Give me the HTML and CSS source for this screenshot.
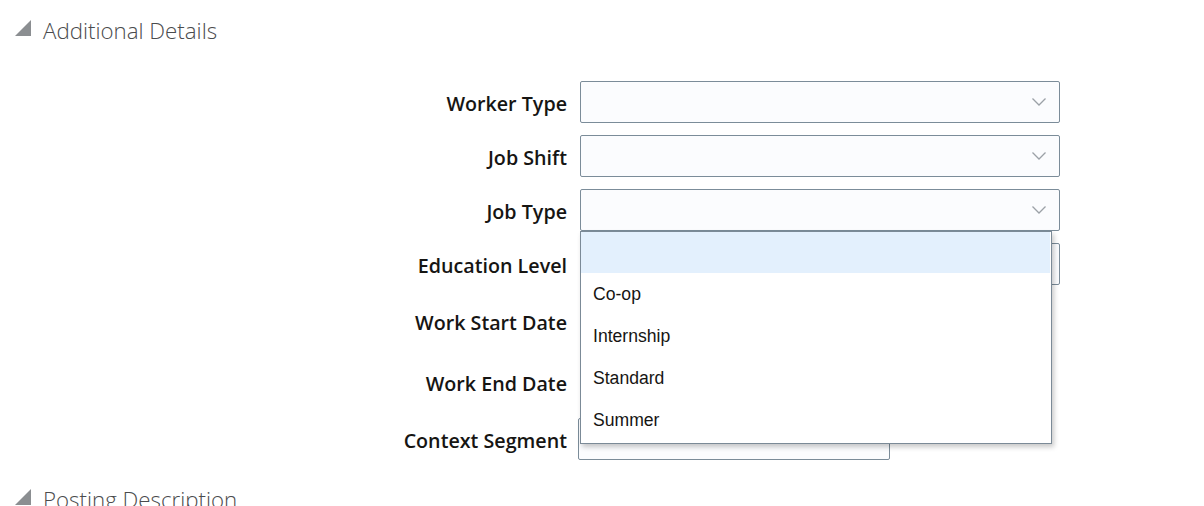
FILE: index.html
```html
<!DOCTYPE html>
<html lang="en">
<head>
<meta charset="utf-8">
<title>Additional Details</title>
<link rel="stylesheet" href="styles.css">
</head>
<body>
<section class="panel">
  <header class="disclosure">
    <span class="tri"></span>
    <h2 class="disclosure-title">Additional Details</h2>
  </header>
  <div class="form">
    <div class="row">
      <label class="label">Worker Type</label>
      <div class="select">
        <svg class="chev" viewBox="0 0 14 8" width="14" height="8"><path d="M0.5 0.5 L7 7 L13.5 0.5" fill="none" stroke="#9ba1a7" stroke-width="1.3"/></svg>
      </div>
    </div>
    <div class="row">
      <label class="label">Job Shift</label>
      <div class="select">
        <svg class="chev" viewBox="0 0 14 8" width="14" height="8"><path d="M0.5 0.5 L7 7 L13.5 0.5" fill="none" stroke="#9ba1a7" stroke-width="1.3"/></svg>
      </div>
    </div>
    <div class="row">
      <label class="label">Job Type</label>
      <div class="select open">
        <svg class="chev" viewBox="0 0 14 8" width="14" height="8"><path d="M0.5 0.5 L7 7 L13.5 0.5" fill="none" stroke="#9ba1a7" stroke-width="1.3"/></svg>
        <ul class="listbox">
          <li class="option active"></li>
          <li class="option">Co-op</li>
          <li class="option">Internship</li>
          <li class="option">Standard</li>
          <li class="option">Summer</li>
        </ul>
      </div>
    </div>
    <div class="row">
      <label class="label">Education Level</label>
      <div class="select"></div>
    </div>
    <div class="row row-start">
      <label class="label">Work Start Date</label>
      <div class="select date"></div>
    </div>
    <div class="row row-end">
      <label class="label">Work End Date</label>
      <div class="select date"></div>
    </div>
    <div class="row row-context">
      <label class="label">Context Segment</label>
      <div class="select context"></div>
    </div>
  </div>
</section>
<section class="panel">
  <header class="disclosure disclosure-next">
    <span class="tri"></span>
    <h2 class="disclosure-title">Posting Description</h2>
  </header>
</section>
</body>
</html>
```
FILE: styles.css
```css
html, body {
  margin: 0;
  padding: 0;
  background: #ffffff;
  overflow: hidden;
  height: 506px;
}
body {
  font-family: "Open Sans", "Noto Sans", sans-serif;
  color: #161513;
}
.disclosure {
  display: flex;
  align-items: center;
  gap: 12px;
  padding: 14px 0 0 15px;
  height: 30px;
}
.tri {
  width: 0;
  height: 0;
  border-style: solid;
  border-width: 0 0 16px 16px;
  border-color: transparent transparent #8b8e91 transparent;
  margin-top: -3px;
}
.disclosure-title {
  margin: 0;
  font-family: "Open Sans", sans-serif;
  font-weight: 300;
  font-size: 22.3px;
  color: #4a4b4d;
  line-height: 30px;
  padding-top: 3px;
}
.form {
  display: flex;
  flex-direction: column;
  gap: 12px;
  padding-top: 37px;
}
.row {
  display: grid;
  grid-template-columns: 567px auto;
  column-gap: 13px;
  align-items: center;
  height: 42px;
}
.row-start {
  margin-top: 3px;
}
.row-end {
  margin-top: 7px;
}
.row-context {
  margin-top: 3px;
}
.label {
  text-align: right;
  font-size: 19.7px;
  font-weight: 600;
  color: #161513;
  padding-top: 3px;
}
.select {
  position: relative;
  box-sizing: border-box;
  width: 480px;
  height: 42px;
  border: 1px solid #7b8c99;
  border-radius: 2px;
  background: #fbfcfe;
  display: flex;
  align-items: center;
  justify-content: flex-end;
  padding-right: 13px;
}
.date {
  width: 312px;
}
.context {
  width: 312px;
  margin-left: -2px;
}
.chev {
  display: block;
}
.open {
  z-index: 2;
}
.listbox {
  position: absolute;
  left: -1px;
  top: 41px;
  width: 472px;
  box-sizing: border-box;
  margin: 0;
  padding: 0 0 2px 0;
  list-style: none;
  background: #ffffff;
  border: 1px solid #7b8a97;
  box-shadow: 2px 3px 5px rgba(0, 0, 0, 0.22);
}
.option {
  height: 42px;
  box-sizing: border-box;
  padding-left: 12px;
  display: flex;
  align-items: center;
  font-family: "Liberation Sans", Arial, sans-serif;
  font-size: 17.6px;
  color: #161513;
}
.option.active {
  height: 41px;
  background: #e3f0fd;
  margin-right: 1px;
}
.disclosure-next {
  padding-top: 23px;
}
```
